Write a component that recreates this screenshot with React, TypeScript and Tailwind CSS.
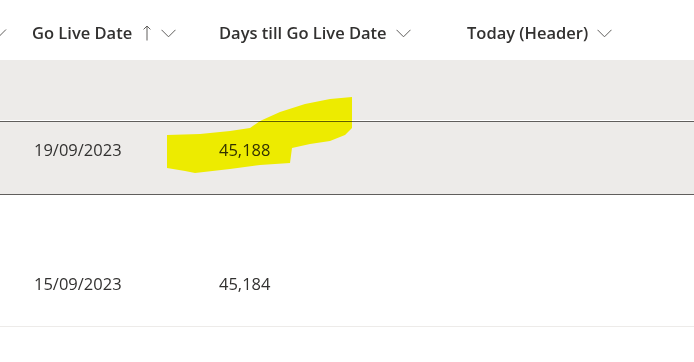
const font = { fontFamily: '"Open Sans", "Noto Sans", Arial, sans-serif' };

function Chevron() {
  return (
    <svg width="15" height="9" viewBox="0 0 15 9" className="shrink-0">
      <path d="M0.5 0.8 L7.5 7.8 L14.5 0.8" fill="none" stroke="#605e5c" strokeWidth="1" />
    </svg>
  );
}

function UpArrow() {
  return (
    <svg width="8" height="16" viewBox="0 0 8 16" className="shrink-0">
      <path d="M4 15.5 V1 M0.6 4.4 L4 1 L7.4 4.4" fill="none" stroke="#605e5c" strokeWidth="1" />
    </svg>
  );
}

interface Row {
  date: string;
  days: string;
}

const rows: Row[] = [
  { date: '19/09/2023', days: '45,188' },
  { date: '15/09/2023', days: '45,184' },
];

export default function App() {
  return (
    <div className="w-[694px] h-[362px] bg-white overflow-hidden text-[#323130]" style={font}>
      {/* Header */}
      <div className="h-[60px] pt-[6px] flex items-center text-[16.5px] font-semibold">
        <div className="w-[32px] flex items-center">
          <svg width="8" height="9" viewBox="0 0 8 9" className="-ml-[1px]">
            <path d="M0 7.5 L7 0.5" fill="none" stroke="#605e5c" strokeWidth="1" />
          </svg>
        </div>
        <div className="w-[187px] flex items-center gap-[11px]">
          <span>Go Live Date</span>
          <span className="flex items-center gap-[10px]">
            <UpArrow />
            <Chevron />
          </span>
        </div>
        <div className="w-[248px] flex items-center gap-[9px]">
          <span>Days till Go Live Date</span>
          <Chevron />
        </div>
        <div className="flex items-center gap-[9px]">
          <span>Today (Header)</span>
          <Chevron />
        </div>
      </div>

      {/* Selected group */}
      <div className="bg-[#edebe9] relative">
        <div className="h-[62px] border-b border-[#605e5c] shadow-[inset_0_-1px_0_#ffffff]" />
        <div className="h-[73px] border-b border-[#605e5c] flex pt-[16px] text-[16.5px]">
          <div className="w-[219px] pl-[34px]">{rows[0].date}</div>
          <div className="w-[248px]">{rows[0].days}</div>
        </div>
        <svg
          width="694"
          height="135"
          viewBox="0 60 694 135"
          className="absolute inset-0 mix-blend-multiply pointer-events-none"
        >
          <polygon
            fill="#ffff00"
            points="167,135 200,134 230,131 250,128 260,121 280,112 305,104 330,99 352,97 352,128 345,135 330,141 310,144 292,148 290,163 260,165 230,169 195,173 185,171 167,168"
          />
        </svg>
      </div>

      <div className="h-[59px]" />
      <div className="h-[73px] border-b border-[#edebe9] flex pt-[18px] text-[16.5px]">
        <div className="w-[219px] pl-[34px]">{rows[1].date}</div>
        <div className="w-[248px]">{rows[1].days}</div>
      </div>
    </div>
  );
}
